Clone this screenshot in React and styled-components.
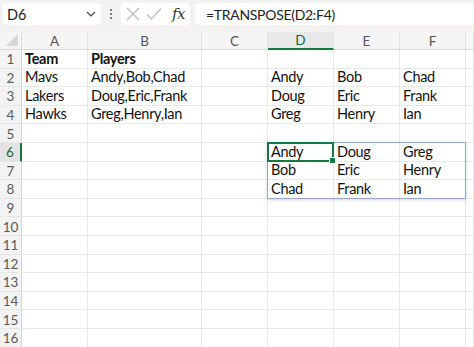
import React from 'react';
import styled, { createGlobalStyle } from 'styled-components';

const ROW_H = 18.6;
const HEAD_H = 18;
const ROWHEAD_W = 22;
const COL_W = [66, 114, 66, 66, 66, 66];
const COL_KEYS = ['A', 'B', 'C', 'D', 'E', 'F', ''];
const GREEN = '#107c41';

const data = {
  1: ['Team', 'Players'],
  2: ['Mavs', 'Andy,Bob,Chad', '', 'Andy', 'Bob', 'Chad'],
  3: ['Lakers', 'Doug,Eric,Frank', '', 'Doug', 'Eric', 'Frank'],
  4: ['Hawks', 'Greg,Henry,Ian', '', 'Greg', 'Henry', 'Ian'],
  6: ['', '', '', 'Andy', 'Doug', 'Greg'],
  7: ['', '', '', 'Bob', 'Eric', 'Henry'],
  8: ['', '', '', 'Chad', 'Frank', 'Ian'],
};

const Global = createGlobalStyle`
  html, body { margin: 0; padding: 0; background: #ffffff; }
  body { width: 474px; height: 347px; overflow: hidden; font-family: "Lato", "Open Sans", sans-serif; }
`;

const Page = styled.div`
  width: 474px;
  height: 347px;
  overflow: hidden;
  display: flex;
  flex-direction: column;
  background: #fff;
`;

const Toolbar = styled.div`
  height: 32px;
  flex: none;
  background: #f3f2f1;
  display: flex;
  align-items: flex-start;
  padding: 3px 0 0 3px;
  box-sizing: border-box;
`;

const NameBox = styled.div`
  width: 98px;
  height: 22px;
  background: #fff;
  border-radius: 4px;
  display: flex;
  align-items: center;
  justify-content: space-between;
  padding: 0 5px 0 4px;
  box-sizing: border-box;
  font-size: 14.5px;
  color: #222;
`;

const Dots = styled.div`
  width: 20px;
  height: 22px;
  display: flex;
  flex-direction: column;
  align-items: center;
  justify-content: center;
  gap: 2px;
  span {
    width: 2px;
    height: 2px;
    border-radius: 50%;
    background: #555;
  }
`;

const IconBox = styled.div`
  width: 69px;
  height: 22px;
  background: #fff;
  border-radius: 4px;
  display: flex;
  align-items: center;
  padding: 0 4px 0 5px;
  box-sizing: border-box;
  gap: 6px;
  margin-right: 5px;
`;

const Fx = styled.span`
  font-family: "DejaVu Serif", "Liberation Serif", serif;
  font-style: italic;
  font-size: 15px;
  color: #333;
  margin-left: 4px;
  letter-spacing: -0.5px;
`;

const FormulaBox = styled.div`
  flex: 1;
  height: 22px;
  background: #fff;
  border-radius: 4px 0 0 4px;
  display: flex;
  align-items: center;
  padding-left: 11px;
  font-size: 14px;
  letter-spacing: -0.3px;
  color: #222;
`;

const Sheet = styled.div`
  position: relative;
  flex: 1;
  display: grid;
  grid-template-columns: ${ROWHEAD_W}px ${COL_W.map((w) => w + 'px').join(' ')} 1fr;
  grid-auto-rows: ${ROW_H}px;
  grid-template-rows: ${HEAD_H}px;
  overflow: hidden;
  background: #fff;
`;

const Corner = styled.div`
  background: #f5f5f5;
  border-right: 1px solid #d9d9d9;
  border-bottom: 1px solid #d9d9d9;
  box-sizing: border-box;
  position: relative;
  &::after {
    content: '';
    position: absolute;
    right: 3px;
    bottom: 3px;
    width: 0;
    height: 0;
    border-left: 12px solid transparent;
    border-bottom: 12px solid #d6d6d6;
  }
`;

const ColHead = styled.div`
  background: ${(p) => (p.$active ? '#e8e8e8' : '#f5f5f5')};
  border-right: 1px solid #e3e3e3;
  border-bottom: ${(p) => (p.$active ? `2px solid ${GREEN}` : '1px solid #d9d9d9')};
  box-sizing: border-box;
  display: flex;
  align-items: center;
  justify-content: center;
  font-size: 13.5px;
  color: ${(p) => (p.$active ? '#0e6b38' : '#555')};
`;

const RowHead = styled.div`
  background: ${(p) => (p.$active ? '#e3e3e3' : '#f3f3f3')};
  border-right: ${(p) => (p.$active ? `2px solid ${GREEN}` : '1px solid #d4d4d4')};
  border-bottom: 1px solid #e6e6e6;
  box-sizing: border-box;
  display: flex;
  align-items: center;
  justify-content: center;
  font-size: 13.5px;
  color: ${(p) => (p.$active ? '#0e6b38' : '#5a5a5a')};
  padding-top: 1px;
`;

const Cell = styled.div`
  border-right: 1px solid #e8e8e8;
  border-bottom: 1px solid #e8e8e8;
  box-sizing: border-box;
  display: flex;
  align-items: flex-end;
  padding: 0 3px 1px 3px;
  font-size: 14.5px;
  letter-spacing: -0.3px;
  font-weight: ${(p) => (p.$bold ? 700 : 400)};
  color: #111;
  white-space: nowrap;
  overflow: visible;
  line-height: 17px;
`;

const SpillFrame = styled.div`
  position: absolute;
  border: 1px solid #8fa8c8;
  box-shadow: 0 1px 3px rgba(80, 100, 140, 0.25);
  box-sizing: border-box;
  pointer-events: none;
`;

const ActiveCell = styled.div`
  position: absolute;
  border: 2px solid ${GREEN};
  box-sizing: border-box;
  pointer-events: none;
  &::after {
    content: '';
    position: absolute;
    right: -4px;
    bottom: -4px;
    width: 5px;
    height: 5px;
    background: ${GREEN};
    border: 1px solid #fff;
  }
`;

const colLeft = (i) => ROWHEAD_W + COL_W.slice(0, i).reduce((a, b) => a + b, 0);
const rowTop = (r) => HEAD_H + (r - 1) * ROW_H;

function XIcon() {
  return (
    <svg width="14" height="14" viewBox="0 0 14 14">
      <path d="M1 1 L13 13 M13 1 L1 13" stroke="#b8b8b8" strokeWidth="1.2" fill="none" />
    </svg>
  );
}

function CheckIcon() {
  return (
    <svg width="16" height="14" viewBox="0 0 16 14">
      <path d="M1 7.5 L5.5 12 L15 1.5" stroke="#b8b8b8" strokeWidth="1.2" fill="none" />
    </svg>
  );
}

function Chevron() {
  return (
    <svg width="10" height="6" viewBox="0 0 10 6">
      <path d="M1 1 L5 5 L9 1" stroke="#444" strokeWidth="1.2" fill="none" />
    </svg>
  );
}

export default function App() {
  const rows = Array.from({ length: 16 }, (_, i) => i + 1);
  return (
    <Page>
      <Global />
      <Toolbar>
        <NameBox>
          <span>D6</span>
          <Chevron />
        </NameBox>
        <Dots>
          <span />
          <span />
          <span />
        </Dots>
        <IconBox>
          <XIcon />
          <CheckIcon />
          <Fx>fx</Fx>
        </IconBox>
        <FormulaBox>=TRANSPOSE(D2:F4)</FormulaBox>
      </Toolbar>
      <Sheet>
        <Corner />
        {COL_KEYS.map((k, i) => (
          <ColHead key={i} $active={k === 'D'}>
            {k}
          </ColHead>
        ))}
        {rows.map((r) => (
          <React.Fragment key={r}>
            <RowHead $active={r === 6}>{r}</RowHead>
            {COL_KEYS.map((k, ci) => (
              <Cell key={ci} $bold={r === 1}>
                {(data[r] && data[r][ci]) || ''}
              </Cell>
            ))}
          </React.Fragment>
        ))}
        <SpillFrame
          style={{
            left: colLeft(3) - 1,
            top: rowTop(6) - 1,
            width: COL_W[3] + COL_W[4] + COL_W[5] + 1,
            height: ROW_H * 3 + 1,
          }}
        />
        <ActiveCell
          style={{
            left: colLeft(3) - 1,
            top: rowTop(6) - 1,
            width: COL_W[3] + 1,
            height: ROW_H + 1,
          }}
        />
      </Sheet>
    </Page>
  );
}
